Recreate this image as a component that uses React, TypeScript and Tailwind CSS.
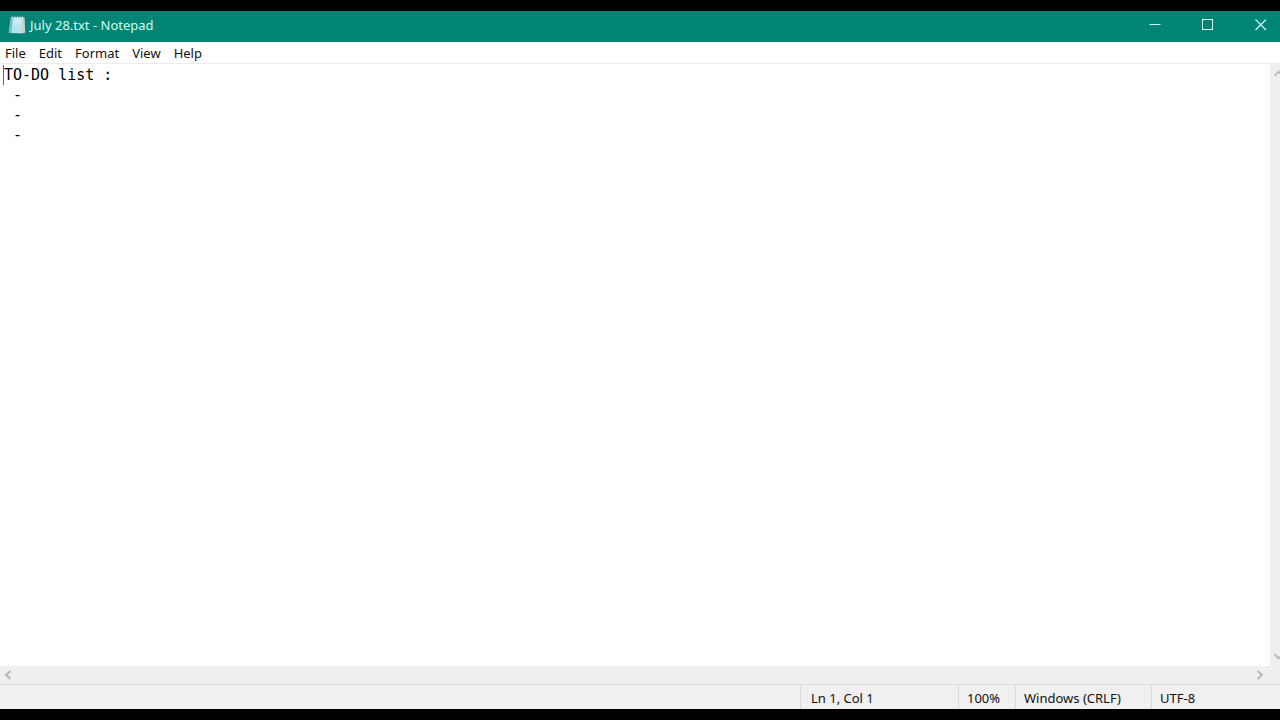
/**
 * Notepad
 *
 * Plain text editor window: title bar, menu bar, text area with scrollbars
 * and a status bar.
 */

import { useState } from 'react';

const MENUS = ['File', 'Edit', 'Format', 'View', 'Help'];

const INITIAL_TEXT = 'TO-DO list :\n -\n -\n -';

function NotepadIcon() {
  return (
    <svg width="18" height="20" viewBox="0 0 18 20" aria-hidden="true">
      <path d="M2.5 2 H16.5 L17.5 18 L14 19 L0.5 18 Z" fill="#5f9c98" />
      <path d="M3 2.5 H15.5 L14.5 18 H1 Z" fill="#b9e3ec" />
      <path d="M3 2.5 H5 L3.5 18 H1 Z" fill="#7fb9c6" />
      <path d="M6 3 H14 L12 10 H5 Z" fill="#cbeaf1" />
      <path d="M15.5 2.5 H16.5 L17 17.5 L14.5 18 Z" fill="#dcd3c0" />
      <path d="M4.5 1.5 V3 M7 1.5 V3 M9.5 1.5 V3 M12 1.5 V3 M14.5 1.5 V3" stroke="#dff3f2" strokeWidth="1" />
    </svg>
  );
}

function WindowButtons() {
  return (
    <div className="ml-auto flex h-full gap-[15px] text-[#d4fbf3]">
      <button aria-label="Minimize" className="flex w-[38px] items-center justify-center hover:bg-white/10">
        <svg width="12" height="12" viewBox="0 0 12 12" stroke="currentColor">
          <path d="M0.5 5.5 H11.5" />
        </svg>
      </button>
      <button aria-label="Maximize" className="flex w-[38px] items-center justify-center hover:bg-white/10">
        <svg width="12" height="12" viewBox="0 0 12 12" fill="none" stroke="currentColor">
          <rect x="0.5" y="0.5" width="10" height="10" />
        </svg>
      </button>
      <button aria-label="Close" className="flex w-[38px] items-center justify-center hover:bg-red-600">
        <svg width="12" height="12" viewBox="0 0 12 12" stroke="currentColor" strokeWidth="1.2">
          <path d="M0.5 0.5 L11 11 M11 0.5 L0.5 11" />
        </svg>
      </button>
    </div>
  );
}

export default function App() {
  const [text, setText] = useState(INITIAL_TEXT);

  return (
    <div className="h-screen bg-black py-[11px] font-['Noto_Sans','Segoe_UI',sans-serif] text-[13px] leading-5 text-[#111111]">
      <div className="flex h-full flex-col overflow-hidden bg-white">
        {/* Title bar */}
        <header className="flex h-[31px] shrink-0 items-center bg-[#008575] pb-[3px] pl-2 text-[#d4fbf3]">
          <NotepadIcon />
          <h1 className="ml-1 whitespace-nowrap">July 28.txt - Notepad</h1>
          <WindowButtons />
        </header>

        {/* Menu bar */}
        <nav className="flex h-[22px] shrink-0 items-center gap-[13px] border-b border-[#ececec] pl-[5px]">
          {MENUS.map((menu) => (
            <button key={menu} className="hover:bg-sky-100">
              {menu}
            </button>
          ))}
        </nav>

        {/* Editor and vertical scrollbar */}
        <div className="flex min-h-0 flex-1">
          <main className="relative flex flex-1">
            <textarea
              aria-label="Document text"
              value={text}
              onChange={(e) => setText(e.target.value)}
              spellCheck={false}
              className="flex-1 resize-none overflow-hidden bg-white pt-px pl-1 font-['DejaVu_Sans_Mono',monospace] text-[15px] leading-5 text-black outline-none"
            />
            {/* Caret at line 1, column 1 */}
            <span className="absolute top-px left-[3px] h-5 w-px bg-[#666666]" />
          </main>
          <div className="flex w-[10px] shrink-0 flex-col justify-between overflow-hidden bg-[#efefef] py-1 pl-1">
            <button aria-label="Scroll up" className="text-[#b4b4b4]">
              <svg width="9" height="10" viewBox="0 0 9 10" fill="none" stroke="currentColor" strokeWidth="1.6">
                <path d="M0.5 8 L4.5 3.5 L8.5 8" />
              </svg>
            </button>
            <button aria-label="Scroll down" className="text-[#b4b4b4]">
              <svg width="9" height="10" viewBox="0 0 9 10" fill="none" stroke="currentColor" strokeWidth="1.6">
                <path d="M0.5 2 L4.5 6.5 L8.5 2" />
              </svg>
            </button>
          </div>
        </div>

        {/* Horizontal scrollbar */}
        <div className="flex h-[18px] shrink-0 items-center justify-between bg-[#efefef] pr-4 pl-1 text-[#b4b4b4]">
          <button aria-label="Scroll left">
            <svg width="8" height="10" viewBox="0 0 8 10" fill="none" stroke="currentColor" strokeWidth="1.8">
              <path d="M6.5 1 L2 5 L6.5 9" />
            </svg>
          </button>
          <button aria-label="Scroll right">
            <svg width="8" height="10" viewBox="0 0 8 10" fill="none" stroke="currentColor" strokeWidth="1.8">
              <path d="M1.5 1 L6 5 L1.5 9" />
            </svg>
          </button>
        </div>

        {/* Status bar */}
        <footer className="flex h-[25px] shrink-0 items-stretch justify-end border-t border-[#dddddd] bg-[#f0f0f0] leading-[26px]">
          <span className="w-[158px] border-l border-[#d9d9d9] pl-[10px]">Ln 1, Col 1</span>
          <span className="w-[57px] border-l border-[#d9d9d9] pl-2">100%</span>
          <span className="w-[136px] border-l border-[#d9d9d9] pl-2">Windows (CRLF)</span>
          <span className="w-[129px] border-l border-[#d9d9d9] pl-2">UTF-8</span>
        </footer>
      </div>
    </div>
  );
}
